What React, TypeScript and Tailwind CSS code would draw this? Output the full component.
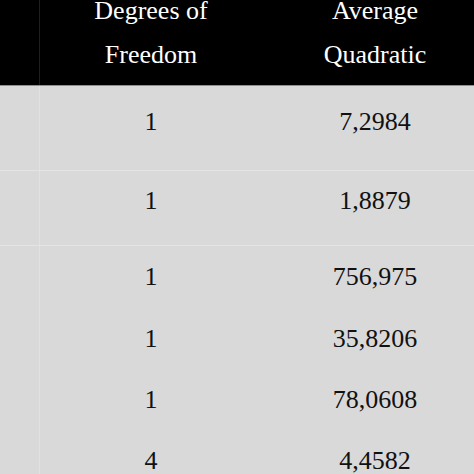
const rows = [
  { df: "1", avg: "7,2984", h: "h-[84px]", pt: "pt-[21px]", line: "" },
  { df: "1", avg: "1,8879", h: "h-[75px]", pt: "pt-[15px]", line: "border-t border-[#e4e4e4]" },
  { df: "1", avg: "756,975", h: "h-[62px]", pt: "pt-[16px]", line: "border-t border-[#e4e4e4]" },
  { df: "1", avg: "35,8206", h: "h-[61px]", pt: "pt-[17px]", line: "" },
  { df: "1", avg: "78,0608", h: "h-[61px]", pt: "pt-[17px]", line: "" },
  { df: "4", avg: "4,4582", h: "h-[61px]", pt: "pt-[17px]", line: "" },
];

export default function App() {
  return (
    <div
      className="w-[474px] h-[474px] overflow-hidden bg-[#d9d9d9] text-[26px]"
      style={{ fontFamily: '"Liberation Serif", "Times New Roman", serif' }}
    >
      {/* Header */}
      <div className="h-[86px] bg-black text-white grid grid-cols-[40px_222px_1fr] border-b border-[#8f8f8f]">
        <div className="border-r border-[#1e1e1e]" />
        <div className="text-center">
          <div className="leading-[22px]">Degrees of</div>
          <div className="leading-[28px] mt-[19px]">Freedom</div>
        </div>
        <div className="text-center pl-[14px]">
          <div className="leading-[22px]">Average</div>
          <div className="leading-[28px] mt-[19px]">Quadratic</div>
        </div>
      </div>

      {/* Body */}
      <div className="text-[#111]">
        {rows.map((r, i) => (
          <div
            key={i}
            className={`grid grid-cols-[40px_222px_1fr] box-border leading-[30px] ${r.h} ${r.line}`}
          >
            <div className="border-r border-[#e1e1e1]" />
            <div className={`text-center ${r.pt}`}>{r.df}</div>
            <div className={`text-center pl-[14px] ${r.pt}`}>{r.avg}</div>
          </div>
        ))}
      </div>
    </div>
  );
}
